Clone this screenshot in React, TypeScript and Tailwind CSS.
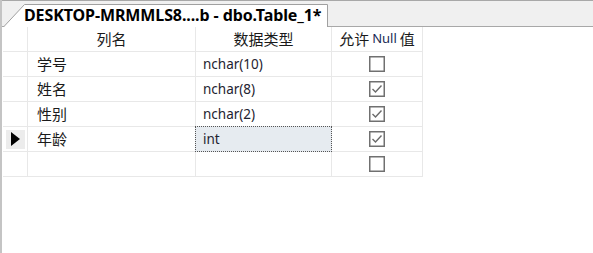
import { Fragment } from 'react';

const rows = [
  { name: '学号', type: 'nchar(10)', nullable: false },
  { name: '姓名', type: 'nchar(8)', nullable: true },
  { name: '性别', type: 'nchar(2)', nullable: true },
  { name: '年龄', type: 'int', nullable: true, current: true },
  { name: '', type: '', nullable: false },
];

function CheckBox({ checked }: { checked: boolean }) {
  return (
    <svg width="16" height="16" viewBox="0 0 16 16">
      <rect x="0.75" y="0.75" width="14.5" height="14.5" fill="white" stroke="#707070" strokeWidth="1.5" />
      {checked && (
        <path d="M3.5 8 L6.5 11 L12.5 4.5" fill="none" stroke="#6a6a6a" strokeWidth="1.4" />
      )}
    </svg>
  );
}

const cell = 'border-r border-b border-[#e8e8e8] h-[25px] flex items-center';

export default function App() {
  return (
    <div className="w-[593px] h-[253px] bg-white overflow-hidden border-l-2 border-[#c4c4c4] text-[#1a1a1a] font-['Noto_Sans','Noto_Sans_CJK_SC',sans-serif]">
      <div className="h-[27px] bg-[#f0f0f0] border-t border-b border-[#a8a8a8] flex">
        <div className="relative ml-px mt-[3px] h-[23px] w-[326px] shrink-0">
          <svg className="absolute inset-0" width="326" height="23" viewBox="0 0 326 23">
            <path d="M0.5 23 L21.5 0.5 H324.5 V23" fill="white" stroke="#a0a0a0" />
          </svg>
          <div className="relative pl-[21px] leading-[23px] text-[16px] font-bold tracking-[-0.1px] text-black whitespace-nowrap">
            DESKTOP-MRMMLS8....b - dbo.Table_1*
          </div>
        </div>
      </div>

      <div className="ml-px grid grid-cols-[25px_168px_136px_91px] w-fit">
        <div className={`${cell} h-[24px]`} />
        <div className={`${cell} h-[24px] justify-center text-[15px] font-['Noto_Sans_CJK_SC',sans-serif]`}>列名</div>
        <div className={`${cell} h-[24px] justify-center text-[15px] font-['Noto_Sans_CJK_SC',sans-serif]`}>数据类型</div>
        <div className={`${cell} h-[24px] justify-center text-[15px] font-['Noto_Sans_CJK_SC',sans-serif]`}>
          允许<span className="mx-[3px] text-[13px] text-[#1a2a55] font-['Noto_Sans',sans-serif]">Null</span>值
        </div>

        {rows.map((r, i) => (
          <Fragment key={i}>
            <div className={`${cell} justify-center`}>
              {r.current && (
                <div className="w-[19px] h-[19px] bg-[#ececec] flex items-center justify-center">
                  <svg width="9" height="14" viewBox="0 0 9 14">
                    <path d="M0 0 L9 7 L0 14 Z" fill="black" />
                  </svg>
                </div>
              )}
            </div>
            <div className={`${cell} pl-[9px] text-[15px] font-['Noto_Sans_CJK_SC',sans-serif]`}>{r.name}</div>
            <div className={`${cell} relative`}>
              {r.current && (
                <div className="absolute left-0 top-0 w-[137px] h-[26px] -mt-px -ml-px bg-[#e6ebf0] border border-dotted border-[#555]" />
              )}
              <span className="relative pl-[7px] text-[13.5px] text-[#1e2330]">{r.type}</span>
            </div>
            <div className={`${cell} justify-center`}>
              <CheckBox checked={r.nullable} />
            </div>
          </Fragment>
        ))}
      </div>
    </div>
  );
}
